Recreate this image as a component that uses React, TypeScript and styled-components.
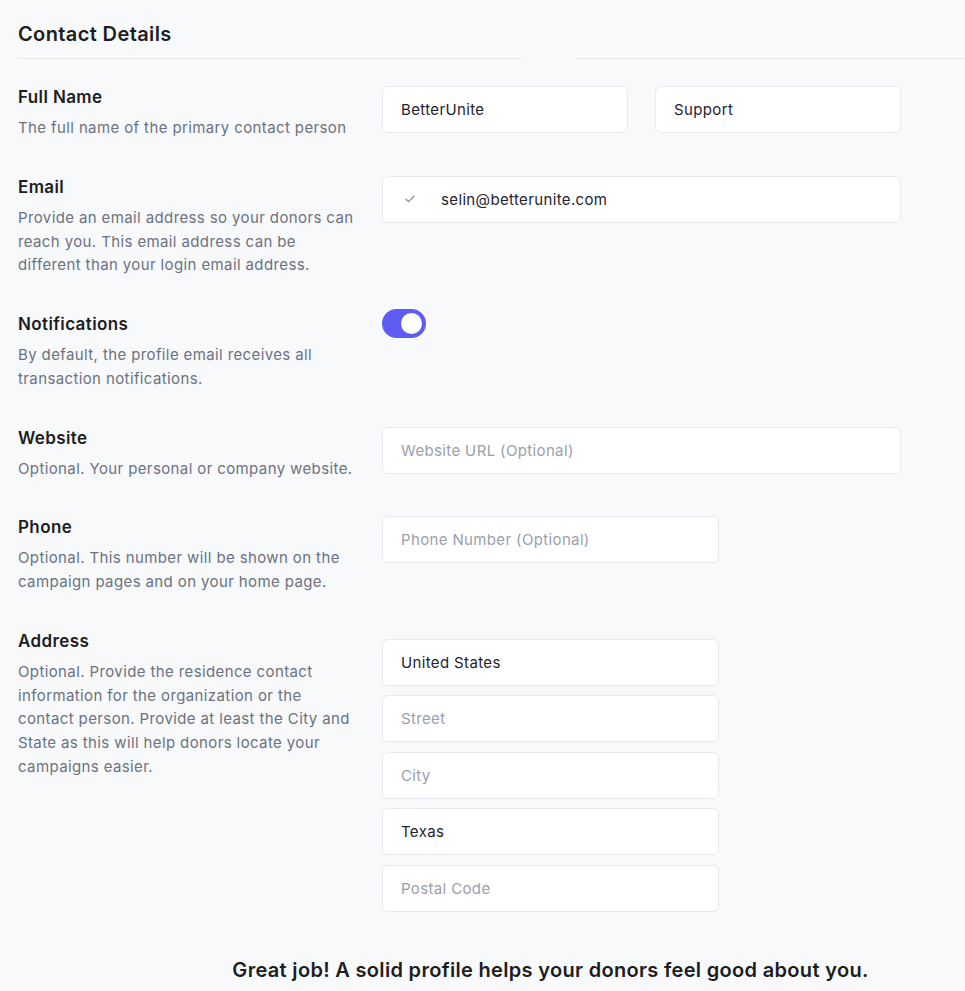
import styled, { createGlobalStyle } from 'styled-components'

const GlobalStyle = createGlobalStyle`
  html, body {
    margin: 0;
    padding: 0;
    background: #f8f9fb;
    overflow: hidden;
  }
  body {
    font-family: 'Inter', 'Noto Sans', sans-serif;
    color: #1c1d22;
    letter-spacing: 0.024em;
  }
  * {
    box-sizing: border-box;
  }
`

const Page = styled.div`
  padding: 20px 0 0 18px;
`

const Title = styled.h2`
  margin: 0;
  font-size: 20px;
  line-height: 28px;
  font-weight: 600;
  color: #1c1d22;
`

const Divider = styled.div`
  display: flex;
  gap: 53px;
  margin-top: 10px;
`

const Line = styled.div<{ $width?: number }>`
  height: 1px;
  background: #e6e8ee;
  ${p => (p.$width ? `width: ${p.$width}px;` : 'flex: 1;')}
`

const Rows = styled.div`
  display: flex;
  flex-direction: column;
  gap: 36px;
  margin-top: 27px;
`

const Row = styled.div`
  display: grid;
  grid-template-columns: 340px 519px;
  column-gap: 24px;
  align-items: start;
`

const Info = styled.div`
  display: flex;
  flex-direction: column;
`

const Label = styled.div`
  font-size: 17px;
  line-height: 22px;
  font-weight: 600;
  color: #1c1d22;
`

const Desc = styled.p`
  margin: 8px 0 0;
  font-size: 15px;
  line-height: 23.75px;
  color: #6b7280;
`

const Fields = styled.div<{ $offset?: number }>`
  display: flex;
  flex-direction: column;
  gap: 9.5px;
  margin-top: ${p => p.$offset ?? 0}px;
`

const Pair = styled.div`
  display: flex;
  gap: 27px;
`

const Box = styled.div<{ $width?: number }>`
  display: flex;
  align-items: center;
  width: ${p => (p.$width ? `${p.$width}px` : '100%')};
  height: 47px;
  padding: 0 18px;
  background: #ffffff;
  border: 1px solid #e8e9f0;
  border-radius: 6px;
`

const Input = styled.input`
  flex: 1;
  min-width: 0;
  border: none;
  outline: none;
  background: transparent;
  padding: 0;
  font-family: inherit;
  font-size: 15px;
  letter-spacing: 0.024em;
  color: #1f2230;

  &::placeholder {
    color: #9aa0ab;
  }
`

const Check = styled.span`
  display: flex;
  width: 20px;
  margin-left: 4px;
  margin-right: 16px;
  color: #8b8f9a;
`

const Toggle = styled.div<{ $on: boolean }>`
  position: relative;
  width: 44px;
  height: 29px;
  margin-top: -4px;
  border-radius: 15px;
  background: ${p => (p.$on ? '#5f5cf6' : '#d1d5db')};
`

const Knob = styled.span<{ $on: boolean }>`
  position: absolute;
  top: 4px;
  left: ${p => (p.$on ? '19px' : '4px')};
  width: 21px;
  height: 21px;
  border-radius: 50%;
  background: #ffffff;
`

const Footer = styled.p`
  margin: 44px 0 0;
  padding-left: 118px;
  text-align: center;
  font-size: 20px;
  line-height: 28px;
  font-weight: 600;
  letter-spacing: 0.016em;
  color: #1c1d22;
`

const App = () => {
  return (
    <>
      <GlobalStyle />
      <Page>
        <Title>Contact Details</Title>
        <Divider>
          <Line $width={505} />
          <Line />
        </Divider>
        <Rows>
          <Row>
            <Info>
              <Label>Full Name</Label>
              <Desc>The full name of the primary contact person</Desc>
            </Info>
            <Pair>
              <Box $width={246}>
                <Input defaultValue="BetterUnite" />
              </Box>
              <Box $width={246}>
                <Input defaultValue="Support" />
              </Box>
            </Pair>
          </Row>
          <Row>
            <Info>
              <Label>Email</Label>
              <Desc>
                Provide an email address so your donors can reach you. This email address can be
                different than your login email address.
              </Desc>
            </Info>
            <Fields>
              <Box>
                <Check>
                  <svg width="10" height="8" viewBox="0 0 10 8" fill="none">
                    <path d="M1 4.2l2.6 2.4L9 1.2" stroke="currentColor" strokeWidth="1.3" strokeLinecap="round" strokeLinejoin="round" />
                  </svg>
                </Check>
                <Input defaultValue="selin@betterunite.com" />
              </Box>
            </Fields>
          </Row>
          <Row>
            <Info>
              <Label>Notifications</Label>
              <Desc>By default, the profile email receives all transaction notifications.</Desc>
            </Info>
            <Toggle $on>
              <Knob $on />
            </Toggle>
          </Row>
          <Row>
            <Info>
              <Label>Website</Label>
              <Desc>Optional. Your personal or company website.</Desc>
            </Info>
            <Fields>
              <Box>
                <Input placeholder="Website URL (Optional)" />
              </Box>
            </Fields>
          </Row>
          <Row>
            <Info>
              <Label>Phone</Label>
              <Desc>Optional. This number will be shown on the campaign pages and on your home page.</Desc>
            </Info>
            <Fields>
              <Box $width={337}>
                <Input placeholder="Phone Number (Optional)" />
              </Box>
            </Fields>
          </Row>
          <Row>
            <Info>
              <Label>Address</Label>
              <Desc>
                Optional. Provide the residence contact information for the organization or the
                contact person. Provide at least the City and State as this will help donors locate
                your campaigns easier.
              </Desc>
            </Info>
            <Fields $offset={9}>
              <Box $width={337}>
                <Input defaultValue="United States" />
              </Box>
              <Box $width={337}>
                <Input placeholder="Street" />
              </Box>
              <Box $width={337}>
                <Input placeholder="City" />
              </Box>
              <Box $width={337}>
                <Input defaultValue="Texas" />
              </Box>
              <Box $width={337}>
                <Input placeholder="Postal Code" />
              </Box>
            </Fields>
          </Row>
        </Rows>
        <Footer>Great job! A solid profile helps your donors feel good about you.</Footer>
      </Page>
    </>
  )
}

export default App
